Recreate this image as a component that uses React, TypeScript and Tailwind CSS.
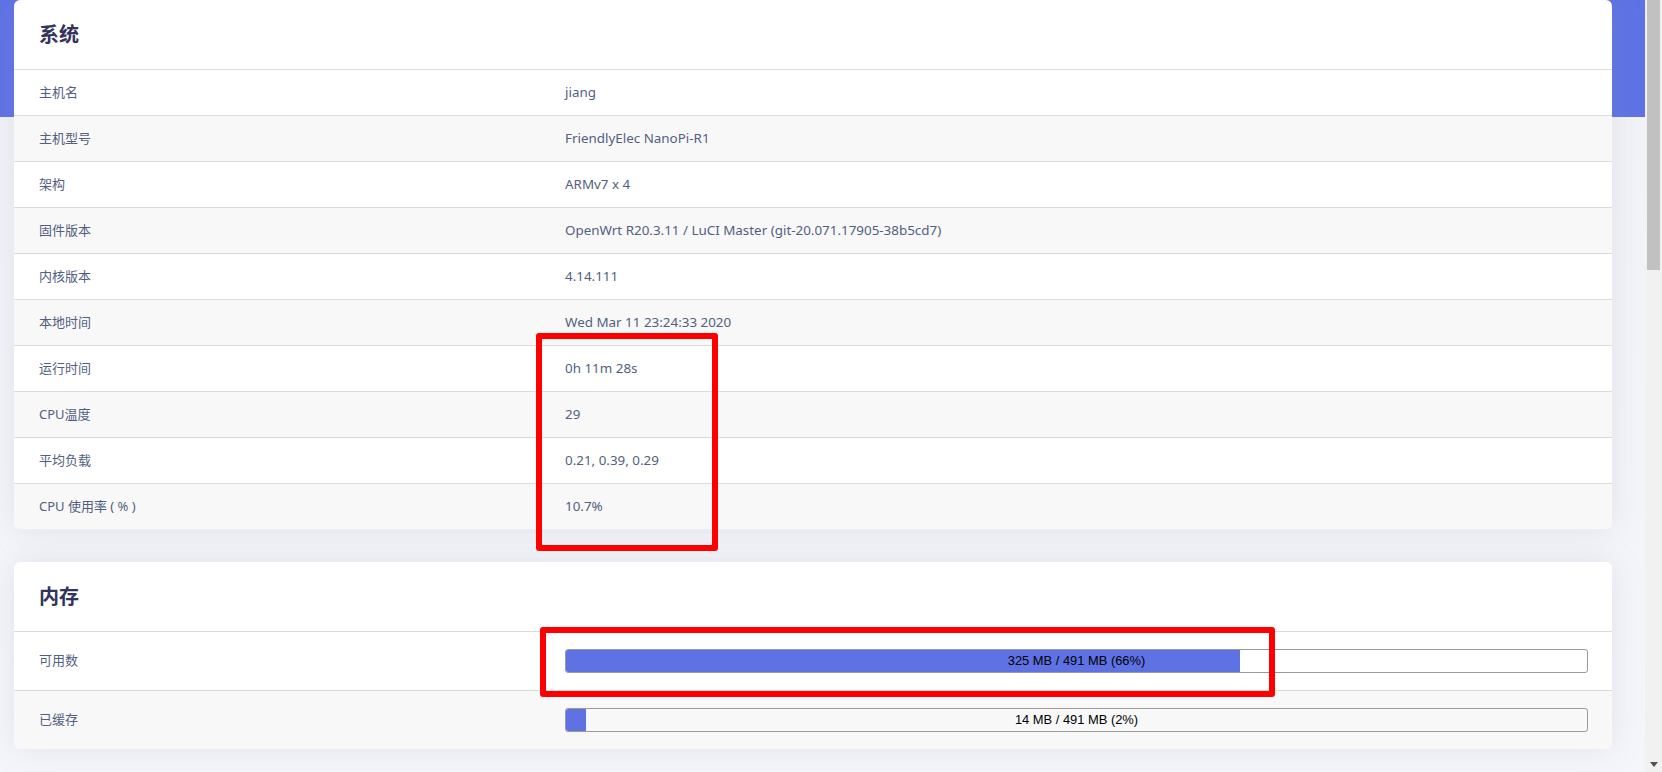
import React from "react";

const sysRows: [string, string][] = [
  ["主机名", "jiang"],
  ["主机型号", "FriendlyElec NanoPi-R1"],
  ["架构", "ARMv7 x 4"],
  ["固件版本", "OpenWrt R20.3.11 / LuCI Master (git-20.071.17905-38b5cd7)"],
  ["内核版本", "4.14.111"],
  ["本地时间", "Wed Mar 11 23:24:33 2020"],
  ["运行时间", "0h 11m 28s"],
  ["CPU温度", "29"],
  ["平均负载", "0.21, 0.39, 0.29"],
  ["CPU 使用率 ( % )", "10.7%"],
];

const memRows: { label: string; text: string; pct: number }[] = [
  { label: "可用数", text: "325 MB / 491 MB (66%)", pct: 66 },
  { label: "已缓存", text: "14 MB / 491 MB (2%)", pct: 2 },
];

const font = { fontFamily: '"Noto Sans", "Noto Sans CJK SC", sans-serif' };

function Card({ title, children }: { title: string; children: React.ReactNode }) {
  return (
    <div className="bg-white rounded-[6px] shadow-[0_0_32px_0_rgba(136,152,170,0.18)] overflow-hidden">
      <div className="h-[69px] flex items-center pl-[25px] pt-[1px] text-[20px] font-bold text-[#32325d]">
        {title}
      </div>
      {children}
    </div>
  );
}

export default function App() {
  return (
    <div
      className="relative flex h-[772px] w-[1662px] overflow-hidden bg-[#f3f4f9]"
      style={font}
    >
      <div className="flex-1 flex flex-col gap-[33px] pl-[14px] pr-[33px] bg-[linear-gradient(to_bottom,#5e72e4_0px,#5e72e4_117px,#f2f3f8_117px,#f5f6fb_100%)]">
        <Card title="系统">
          {sysRows.map(([k, v], i) => (
            <div
              key={k}
              className={`h-[46px] border-t border-[#dcdcdc] flex items-center text-[13px] text-[#525f7f] ${
                i % 2 === 1 ? "bg-[#f8f8f8]" : "bg-white"
              }`}
            >
              <div className="w-[551px] pl-[25px] shrink-0">{k}</div>
              <div className="text-[13.4px]">{v}</div>
            </div>
          ))}
        </Card>
        <Card title="内存">
          {memRows.map((r, i) => (
            <div
              key={r.label}
              className={`h-[59px] border-t border-[#dcdcdc] flex items-center text-[13px] text-[#525f7f] ${
                i % 2 === 1 ? "bg-[#f8f8f8]" : "bg-white"
              }`}
            >
              <div className="w-[551px] pl-[25px] shrink-0">{r.label}</div>
              <div className="flex-1 mr-[24px] h-[24px] border border-[#9a9a9a] rounded-[3px] relative overflow-hidden">
                <div
                  className="absolute left-0 top-0 bottom-0 bg-[#5e72e4]"
                  style={{ width: `${r.pct}%` }}
                />
                <div
                  className="absolute inset-0 flex items-center justify-center text-[12.9px] text-black"
                  style={{ fontFamily: '"Liberation Sans", Arial, sans-serif' }}
                >
                  {r.text}
                </div>
              </div>
            </div>
          ))}
        </Card>
      </div>
      <div className="w-[17px] bg-[#f1f1f1] flex flex-col">
        <div className="mx-[2px] h-[270px] bg-[#c1c1c1]" />
        <div className="flex-1" />
        <div className="h-[8px] mb-[2px] flex justify-center">
          <svg width="8" height="5" viewBox="0 0 8 5">
            <path d="M0 0 L8 0 L4 5 Z" fill="#505050" />
          </svg>
        </div>
      </div>
      <div className="absolute left-[536px] top-[333px] w-[182px] h-[218px] border-[6px] border-[#ff0000] rounded-[3px]" />
      <div className="absolute left-[540px] top-[627px] w-[735px] h-[70px] border-[6px] border-[#ff0000] rounded-[3px]" />
    </div>
  );
}
